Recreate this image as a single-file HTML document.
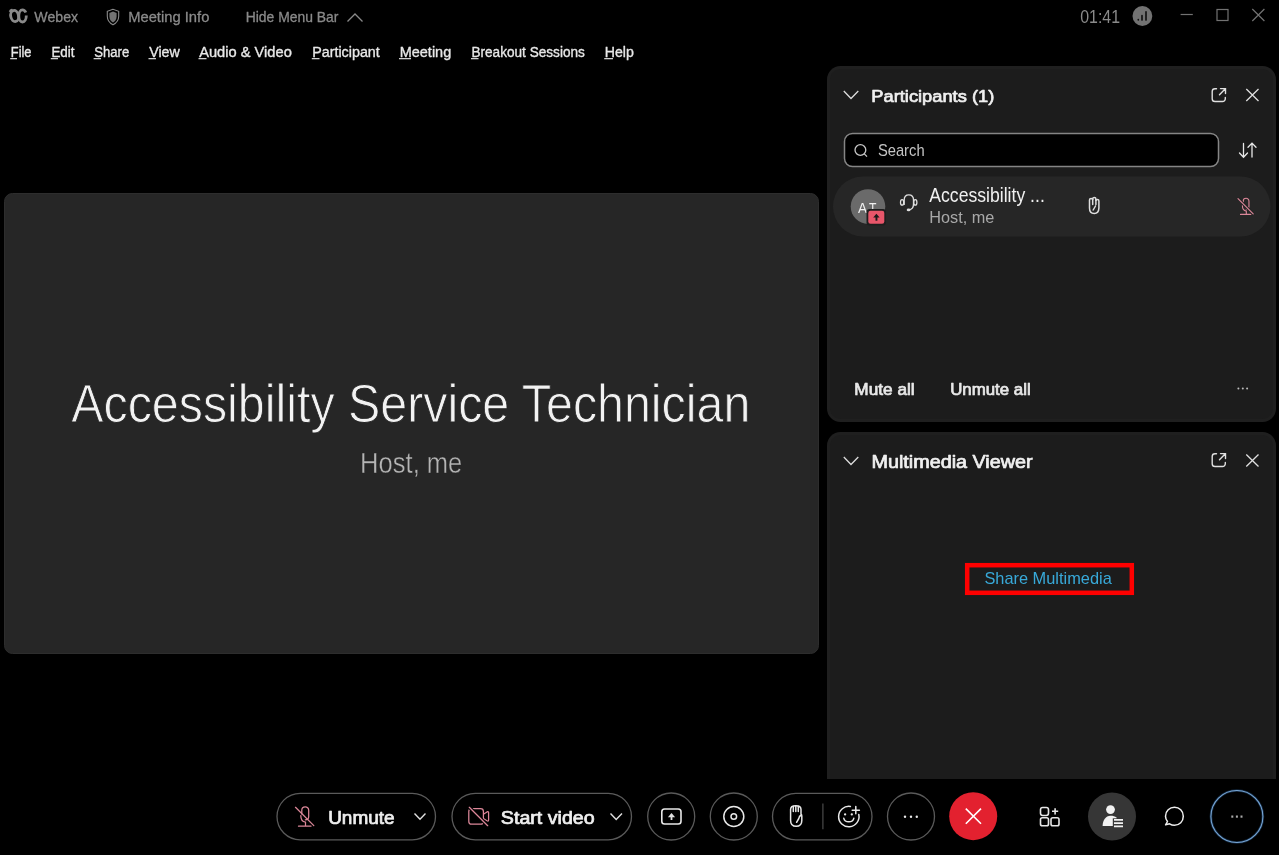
<!DOCTYPE html>
<html><head><meta charset="utf-8"><title>Webex Meeting</title>
<style>
html,body{margin:0;padding:0;background:#000;width:1279px;height:855px;overflow:hidden}
svg{display:block;font-family:"Liberation Sans",sans-serif;will-change:transform}
</style></head>
<body>
<svg width="1279" height="855" viewBox="0 0 1279 855">
<rect width="1279" height="855" fill="#000"/>
<rect x="4.5" y="193.5" width="814" height="460" rx="8" fill="#262626" stroke="#2d2d2d" stroke-width="1"/>
<rect x="827" y="66" width="449" height="356" rx="13.5" fill="#1f1f1f"/><rect x="830" y="69" width="443" height="350" rx="10.5" fill="#1c1c1c"/>
<path d="M827 779 V445.5 a13.5 13.5 0 0 1 13.5 -13.5 H1262.5 a13.5 13.5 0 0 1 13.5 13.5 V779 Z" fill="#1f1f1f"/><path d="M830 779 V445.5 a10.5 10.5 0 0 1 10.5 -10.5 H1262.5 a10.5 10.5 0 0 1 10.5 10.5 V779 Z" fill="#1c1c1c"/>
<g fill="none" stroke="#8a8a8a" stroke-width="2.8"><ellipse cx="14.6" cy="16" rx="3.9" ry="5.6" transform="rotate(-12 14.6 16)"/><path d="M25.8 12.5 C25 10.5 23.8 9.8 22.5 9.8 C20.3 9.8 18.8 12.5 18.8 16 C18.8 19.5 20.3 22 22.5 22 C24.8 22 26.3 19 26.3 15.5" /></g>
<path d="M10 12 C10.5 10.5 11.5 10 12.5 10.3" fill="none" stroke="#8a8a8a" stroke-width="2.6"/>
<text x="34.35" y="22.00" font-size="15.12" font-weight="normal" fill="#8a8a8a" textLength="43.79" lengthAdjust="spacingAndGlyphs"  stroke="#8a8a8a" stroke-width="0.3" stroke-linejoin="round">Webex</text>
<path d="M113 9.3 L107.3 11.3 V16.3 C107.3 20.6 109.8 23.2 113 24.8 C116.2 23.2 118.7 20.6 118.7 16.3 V11.3 Z" fill="none" stroke="#8a8a8a" stroke-width="1.1"/>
<path d="M113 11.6 L109.4 12.9 V16.5 C109.4 19.6 111 21.4 113 22.5 C115 21.4 116.6 19.6 116.6 16.5 V12.9 Z" fill="#747474"/>
<text x="128.15" y="22.00" font-size="15.12" font-weight="normal" fill="#8a8a8a" textLength="81.22" lengthAdjust="spacingAndGlyphs"  stroke="#8a8a8a" stroke-width="0.3" stroke-linejoin="round">Meeting Info</text>
<text x="245.75" y="22.00" font-size="15.12" font-weight="normal" fill="#8a8a8a" textLength="92.70" lengthAdjust="spacingAndGlyphs"  stroke="#8a8a8a" stroke-width="0.3" stroke-linejoin="round">Hide Menu Bar</text>
<path d="M347.5 21.5 L355 14 L362.5 21.5" fill="none" stroke="#8a8a8a" stroke-width="1.3"/>
<text x="1080.20" y="23.40" font-size="18.90" font-weight="normal" fill="#8a8a8a" textLength="39.80" lengthAdjust="spacingAndGlyphs" >01:41</text>
<circle cx="1142.4" cy="16" r="9.9" fill="#727272"/>
<g stroke="#141414" stroke-width="1.7" stroke-linecap="round"><path d="M1138.3 19.6 V19.8 M1142 15.6 V20 M1146 11.8 V20"/></g>
<g stroke="#727272" stroke-width="1.2" fill="none"><path d="M1180.6 14.5 H1192.8"/><rect x="1217" y="9.5" width="11" height="11"/><path d="M1252.3 9 L1264.4 21 M1264.4 9 L1252.3 21"/></g>
<text x="10.78" y="56.70" font-size="15.04" font-weight="normal" fill="#e8e8e8" textLength="20.74" lengthAdjust="spacingAndGlyphs"  stroke="#e8e8e8" stroke-width="0.35" stroke-linejoin="round">File</text>
<text x="51.38" y="56.70" font-size="15.04" font-weight="normal" fill="#e8e8e8" textLength="23.16" lengthAdjust="spacingAndGlyphs"  stroke="#e8e8e8" stroke-width="0.35" stroke-linejoin="round">Edit</text>
<text x="94.27" y="56.70" font-size="15.04" font-weight="normal" fill="#e8e8e8" textLength="34.96" lengthAdjust="spacingAndGlyphs"  stroke="#e8e8e8" stroke-width="0.35" stroke-linejoin="round">Share</text>
<text x="149.18" y="56.70" font-size="15.04" font-weight="normal" fill="#e8e8e8" textLength="30.61" lengthAdjust="spacingAndGlyphs"  stroke="#e8e8e8" stroke-width="0.35" stroke-linejoin="round">View</text>
<text x="199.18" y="56.70" font-size="15.04" font-weight="normal" fill="#e8e8e8" textLength="92.65" lengthAdjust="spacingAndGlyphs"  stroke="#e8e8e8" stroke-width="0.35" stroke-linejoin="round">Audio &amp; Video</text>
<text x="312.18" y="56.70" font-size="15.04" font-weight="normal" fill="#e8e8e8" textLength="67.65" lengthAdjust="spacingAndGlyphs"  stroke="#e8e8e8" stroke-width="0.35" stroke-linejoin="round">Participant</text>
<text x="399.68" y="56.70" font-size="15.04" font-weight="normal" fill="#e8e8e8" textLength="51.55" lengthAdjust="spacingAndGlyphs"  stroke="#e8e8e8" stroke-width="0.35" stroke-linejoin="round">Meeting</text>
<text x="471.48" y="56.70" font-size="15.04" font-weight="normal" fill="#e8e8e8" textLength="113.36" lengthAdjust="spacingAndGlyphs"  stroke="#e8e8e8" stroke-width="0.35" stroke-linejoin="round">Breakout Sessions</text>
<text x="604.77" y="56.70" font-size="15.04" font-weight="normal" fill="#e8e8e8" textLength="29.04" lengthAdjust="spacingAndGlyphs"  stroke="#e8e8e8" stroke-width="0.35" stroke-linejoin="round">Help</text>
<rect x="10.2" y="58.1" width="6.800000000000001" height="1.15" fill="#e8e8e8"/>
<rect x="50.8" y="58.1" width="7.200000000000003" height="1.15" fill="#e8e8e8"/>
<rect x="93.6" y="58.1" width="7.400000000000006" height="1.15" fill="#e8e8e8"/>
<rect x="148.5" y="58.1" width="7.5" height="1.15" fill="#e8e8e8"/>
<rect x="198.5" y="58.1" width="8.0" height="1.15" fill="#e8e8e8"/>
<rect x="311.8" y="58.1" width="7.699999999999989" height="1.15" fill="#e8e8e8"/>
<rect x="399" y="58.1" width="12" height="1.15" fill="#e8e8e8"/>
<rect x="471" y="58.1" width="7.5" height="1.15" fill="#e8e8e8"/>
<rect x="604.2" y="58.1" width="8.799999999999955" height="1.15" fill="#e8e8e8"/>
<text x="71.25" y="422.30" font-size="54.07" font-weight="normal" fill="#f2f2f2" textLength="679.04" lengthAdjust="spacingAndGlyphs"  stroke="#262626" stroke-width="0.9" stroke-linejoin="round">Accessibility Service Technician</text>
<text x="360.10" y="473.00" font-size="29.22" font-weight="normal" fill="#b4b4b4" textLength="102.23" lengthAdjust="spacingAndGlyphs"  stroke="#262626" stroke-width="0.4" stroke-linejoin="round">Host, me</text>
<path d="M843.8 91 L851 98.5 L858.3 91" fill="none" stroke="#dcdcdc" stroke-width="1.3"/>
<text x="871.35" y="101.90" font-size="17.30" font-weight="normal" fill="#f0f0f0" textLength="122.90" lengthAdjust="spacingAndGlyphs"  stroke="#f0f0f0" stroke-width="0.7" stroke-linejoin="round">Participants (1)</text>
<g fill="none" stroke="#e0e0e0" stroke-width="1.4" stroke-linecap="round"><path d="M1216.5 88.7 H1215 a2.8 2.8 0 0 0 -2.8 2.8 V98.7 a2.8 2.8 0 0 0 2.8 2.8 H1222.5 a2.8 2.8 0 0 0 2.8 -2.8 V97.5"/><path d="M1219.5 94.7 L1225.3 88.8 M1220.5 88.6 H1225.5 V93.5"/></g>
<path d="M1246.3 89 L1258.5 101 M1258.5 89 L1246.3 101" stroke="#e0e0e0" stroke-width="1.3"/>
<rect x="844.5" y="133.5" width="374" height="33" rx="8" fill="#000" stroke="#858585" stroke-width="1.5"/>
<circle cx="860.4" cy="150" r="5.4" fill="none" stroke="#c8c8c8" stroke-width="1.3"/><path d="M864.3 153.9 L867 156.6" stroke="#c8c8c8" stroke-width="1.3"/>
<text x="877.90" y="156.00" font-size="17.01" font-weight="normal" fill="#c4c4c4" textLength="46.71" lengthAdjust="spacingAndGlyphs" >Search</text>
<g fill="none" stroke="#e8e8e8" stroke-width="1.3" stroke-linecap="round"><path d="M1243.5 143.5 V157 M1239.5 153 L1243.5 157.2 L1247.5 153"/><path d="M1252 157 V143.3 M1248 147.3 L1252 143.1 L1256 147.3"/></g>
<rect x="833" y="176.5" width="437.5" height="60" rx="30" fill="#262626"/>
<circle cx="868" cy="206.6" r="17.3" fill="#6a6a6a"/>
<text x="857.90" y="212.50" font-size="14.83" font-weight="normal" fill="#f0f0f0" textLength="8.99" lengthAdjust="spacingAndGlyphs" >A</text>
<text x="868.90" y="212.50" font-size="14.83" font-weight="normal" fill="#f0f0f0" textLength="7.41" lengthAdjust="spacingAndGlyphs" >T</text>
<rect x="866.5" y="209" width="19.5" height="16.5" rx="3" fill="#1e1e1e"/>
<rect x="868.3" y="210.8" width="16" height="13" rx="2.2" fill="#e8566a"/>
<path d="M873.2 217.6 L876.4 213.8 L879.6 217.6 Z" fill="#1a1a1a"/><rect x="875.5" y="216.5" width="1.9" height="4.2" fill="#1a1a1a"/>
<g fill="none" stroke="#e0e0e0" stroke-width="1.3"><path d="M904.2 205 V200 C904.2 196.5 906 194.8 908.8 194.8 C911.6 194.8 913.5 196.5 913.5 200 V204 C913.5 207.5 911.5 209.5 909 209.8"/><ellipse cx="902.1" cy="202.4" rx="1.6" ry="2.7"/><ellipse cx="915.3" cy="202.4" rx="1.6" ry="2.7"/></g><ellipse cx="908.6" cy="209.9" rx="1.9" ry="1.4" fill="#e0e0e0"/>
<text x="929.30" y="201.70" font-size="19.91" font-weight="normal" fill="#f0f0f0" textLength="115.50" lengthAdjust="spacingAndGlyphs" >Accessibility ...</text>
<text x="929.30" y="223.30" font-size="17.01" font-weight="normal" fill="#a8a8a8" textLength="65.12" lengthAdjust="spacingAndGlyphs" >Host, me</text>
<g fill="none" stroke="#dedede" stroke-width="1.5" stroke-linecap="round"><path d="M1089.5 202 V200 a1.6 1.6 0 0 1 3.2 0 V199 a1.6 1.6 0 0 1 3.2 0 V201 a1.5 1.5 0 0 1 3 0 V208 C1098.8 211.5 1097 213.5 1094.2 213.5 C1091.3 213.5 1089.5 211.5 1089.5 208 Z"/><path d="M1092.7 199.5 V204.5 M1095.9 199.5 V204.5 M1095.5 206 L1093.2 210"/></g>
<g transform="translate(1238 198.3) scale(0.83) translate(-295.5 -806.8)" fill="none" stroke="#dc8799" stroke-width="1.35" stroke-linecap="round"><path d="M301.8 814 V810.25 A3.45 3.45 0 0 1 308.7 810.25 V816.5 C308.7 818.5 307.2 819.8 305.3 819.8"/><path d="M300.8 815.5 C300.8 819.5 302.8 821.8 305.5 822.2 V826.2 M298.5 826.2 H311"/><path d="M295.5 807.3 L313.8 825.6" stroke="#262626" stroke-width="3.2"/><path d="M295.5 807.3 L313.8 825.6" stroke="#262626" stroke-width="3.2"/><path d="M295.5 807.3 L313.8 825.6"/></g>
<text x="854.35" y="394.70" font-size="15.99" font-weight="normal" fill="#e8e8e8" textLength="60.28" lengthAdjust="spacingAndGlyphs"  stroke="#e8e8e8" stroke-width="0.7" stroke-linejoin="round">Mute all</text>
<text x="950.15" y="394.70" font-size="15.99" font-weight="normal" fill="#e8e8e8" textLength="80.50" lengthAdjust="spacingAndGlyphs"  stroke="#e8e8e8" stroke-width="0.7" stroke-linejoin="round">Unmute all</text>
<circle cx="1238.4" cy="388.6" r="1" fill="#bdbdbd"/>
<circle cx="1242.8" cy="388.6" r="1" fill="#bdbdbd"/>
<circle cx="1247.1" cy="388.6" r="1" fill="#bdbdbd"/>
<path d="M843.8 457 L851 464.5 L858.3 457" fill="none" stroke="#dcdcdc" stroke-width="1.3"/>
<text x="871.45" y="467.80" font-size="17.73" font-weight="normal" fill="#f0f0f0" textLength="161.18" lengthAdjust="spacingAndGlyphs"  stroke="#f0f0f0" stroke-width="0.7" stroke-linejoin="round">Multimedia Viewer</text>
<g fill="none" stroke="#e0e0e0" stroke-width="1.4" stroke-linecap="round"><path d="M1216.5 453.7 H1215 a2.8 2.8 0 0 0 -2.8 2.8 V463.7 a2.8 2.8 0 0 0 2.8 2.8 H1222.5 a2.8 2.8 0 0 0 2.8 -2.8 V462.5"/><path d="M1219.5 459.7 L1225.3 453.8 M1220.5 453.6 H1225.5 V458.5"/></g>
<path d="M1246.3 454.5 L1258.5 466.5 M1258.5 454.5 L1246.3 466.5" stroke="#e0e0e0" stroke-width="1.3"/>
<rect x="967.2" y="565.2" width="164.6" height="27.6" fill="none" stroke="#ff0000" stroke-width="4.5"/>
<text x="984.40" y="583.70" font-size="17.01" font-weight="normal" fill="#38a9d9" textLength="127.38" lengthAdjust="spacingAndGlyphs" >Share Multimedia</text>
<rect x="277" y="793.3" width="158.5" height="46.5" rx="23.25" fill="#000" stroke="#5a5a5a" stroke-width="1.3"/>
<g fill="none" stroke="#dc8799" stroke-width="1.25" stroke-linecap="round"><path d="M301.8 814 V810.25 A3.45 3.45 0 0 1 308.7 810.25 V816.5 C308.7 818.5 307.2 819.8 305.3 819.8"/><path d="M300.8 815.5 C300.8 819.5 302.8 821.8 305.5 822.2 V826.2 M298.5 826.2 H311"/><path d="M295.5 807.3 L313.8 825.6"/></g>
<text x="328.15" y="823.80" font-size="17.88" font-weight="normal" fill="#eeeeee" textLength="66.48" lengthAdjust="spacingAndGlyphs"  stroke="#eeeeee" stroke-width="0.7" stroke-linejoin="round">Unmute</text>
<path d="M414.5 813.5 L420 819.2 L425.5 813.5" fill="none" stroke="#e0e0e0" stroke-width="1.4"/>
<rect x="452" y="793.3" width="179.5" height="46.5" rx="23.25" fill="#000" stroke="#5a5a5a" stroke-width="1.3"/>
<g fill="none" stroke="#dc8799" stroke-width="1.25" stroke-linecap="round" stroke-linejoin="round"><rect x="468.8" y="808.6" width="14.6" height="15.6" rx="2.8"/><path d="M483.8 814 L487 811.9 Q488.6 811 488.6 812.8 V819.8 Q488.6 821.6 487 820.8 L483.8 818.8"/><path d="M469.3 807.3 L487.7 825.7" stroke="#000" stroke-width="3.6"/><path d="M469.3 807.3 L487.7 825.7"/></g>
<text x="500.85" y="823.50" font-size="17.44" font-weight="normal" fill="#eeeeee" textLength="93.81" lengthAdjust="spacingAndGlyphs"  stroke="#eeeeee" stroke-width="0.7" stroke-linejoin="round">Start video</text>
<path d="M610.5 813.5 L616.2 819.5 L622 813.5" fill="none" stroke="#e0e0e0" stroke-width="1.4"/>
<circle cx="671.2" cy="816.5" r="23.5" fill="#000" stroke="#5a5a5a" stroke-width="1.3"/>
<rect x="661.8" y="809" width="19.2" height="15" rx="2.8" fill="none" stroke="#e8e8e8" stroke-width="1.6"/>
<path d="M667.9 817.3 L671.5 812.9 L675.1 817.3 Z" fill="#e0e0e0"/><rect x="670.6" y="816" width="1.8" height="4" fill="#e0e0e0"/>
<circle cx="733.8" cy="816.5" r="23.5" fill="#000" stroke="#5a5a5a" stroke-width="1.3"/>
<circle cx="733.8" cy="816.5" r="10" fill="none" stroke="#e8e8e8" stroke-width="1.5"/><circle cx="733.8" cy="816.5" r="2.8" fill="none" stroke="#e8e8e8" stroke-width="1.5"/>
<rect x="772.5" y="793.3" width="99.5" height="46.5" rx="23.25" fill="#000" stroke="#5a5a5a" stroke-width="1.3"/>
<path d="M822.9 803.5 V829.3" stroke="#4a4a4a" stroke-width="1.2"/>
<g fill="none" stroke="#e8e8e8" stroke-width="1.5" stroke-linecap="round" stroke-linejoin="round"><path d="M790.6 809.5 Q790.6 805.8 795.8 805.8 Q801 805.8 801 809.5 V814.3 Q801.8 814.5 801.8 816 V820.5 Q801.8 826.3 796.2 826.3 Q790.6 826.3 790.6 820.5 Z"/><path d="M793.3 806.5 V811.5 M795.8 806.2 V811.5 M798.3 806.5 V811.5"/><path d="M801 815.3 Q799.2 816 798.8 818.5 L796.6 822.3"/></g>
<g fill="none" stroke="#e8e8e8" stroke-width="1.5" stroke-linecap="round"><path d="M850.4 806.5 A10.2 10.2 0 1 0 858.8 814.5"/><path d="M843.8 818.3 C844.8 823 852.8 823 853.8 818.3"/><path d="M855.8 806.6 V813.8 M852.2 810.2 H859.4"/></g><circle cx="845.1" cy="814.4" r="1.15" fill="#e8e8e8"/><circle cx="851.8" cy="814.4" r="1.15" fill="#e8e8e8"/>
<circle cx="911" cy="816.5" r="23.5" fill="#000" stroke="#5a5a5a" stroke-width="1.3"/>
<circle cx="905" cy="816.7" r="1.2" fill="#e8e8e8"/>
<circle cx="911" cy="816.7" r="1.2" fill="#e8e8e8"/>
<circle cx="916.8" cy="816.7" r="1.2" fill="#e8e8e8"/>
<circle cx="973.2" cy="816.2" r="24" fill="#e3212f"/>
<path d="M965.8 808.6 L981 823.8 M981 808.6 L965.8 823.8" stroke="#fff" stroke-width="1.6"/>
<g fill="none" stroke="#e6e6e6" stroke-width="1.6"><rect x="1040.5" y="807.5" width="8" height="8" rx="2.2"/><rect x="1040.5" y="817.8" width="8" height="8" rx="1.8"/><rect x="1051" y="817.8" width="8" height="8" rx="1.8"/><path d="M1055.1 808.2 V814.4 M1052 811.3 H1058.2"/></g>
<circle cx="1112" cy="816.5" r="24" fill="#363636"/>
<circle cx="1110.5" cy="809.6" r="4.4" fill="#f2f2f2"/>
<path d="M1102.6 826 C1102.6 820 1105.8 815.7 1110.5 815.7 C1113 815.7 1115 816.3 1116.6 817.5 V826 Z" fill="#f2f2f2"/>
<rect x="1112.8" y="818.3" width="11" height="9.6" fill="#363636"/>
<g stroke="#f2f2f2" stroke-width="1.7"><path d="M1114 819.9 H1123 M1114 823.1 H1123 M1114 826.3 H1123"/></g>
<path d="M1165.6 824.8 L1167.5 821.5 C1166.3 820 1165.5 818.3 1165.5 816.3 C1165.5 811 1169.6 807.3 1174.5 807.3 C1179.4 807.3 1183.3 811 1183.3 816.3 C1183.3 821.6 1179.4 825.2 1174.5 825.2 C1172.6 825.2 1171 824.7 1169.6 823.8 Z" fill="none" stroke="#eeeeee" stroke-width="1.5" stroke-linejoin="round"/>
<circle cx="1236.9" cy="816.5" r="26" fill="#000" stroke="#142a42" stroke-width="2.6"/><circle cx="1236.9" cy="816.5" r="26" fill="none" stroke="#79a7d6" stroke-width="1.05"/>
<rect x="1231.3" y="815.5" width="2" height="2.2" fill="#a8a8a8"/>
<rect x="1235.9" y="815.5" width="2" height="2.2" fill="#a8a8a8"/>
<rect x="1240.5" y="815.5" width="2" height="2.2" fill="#a8a8a8"/>
</svg>
</body></html>
